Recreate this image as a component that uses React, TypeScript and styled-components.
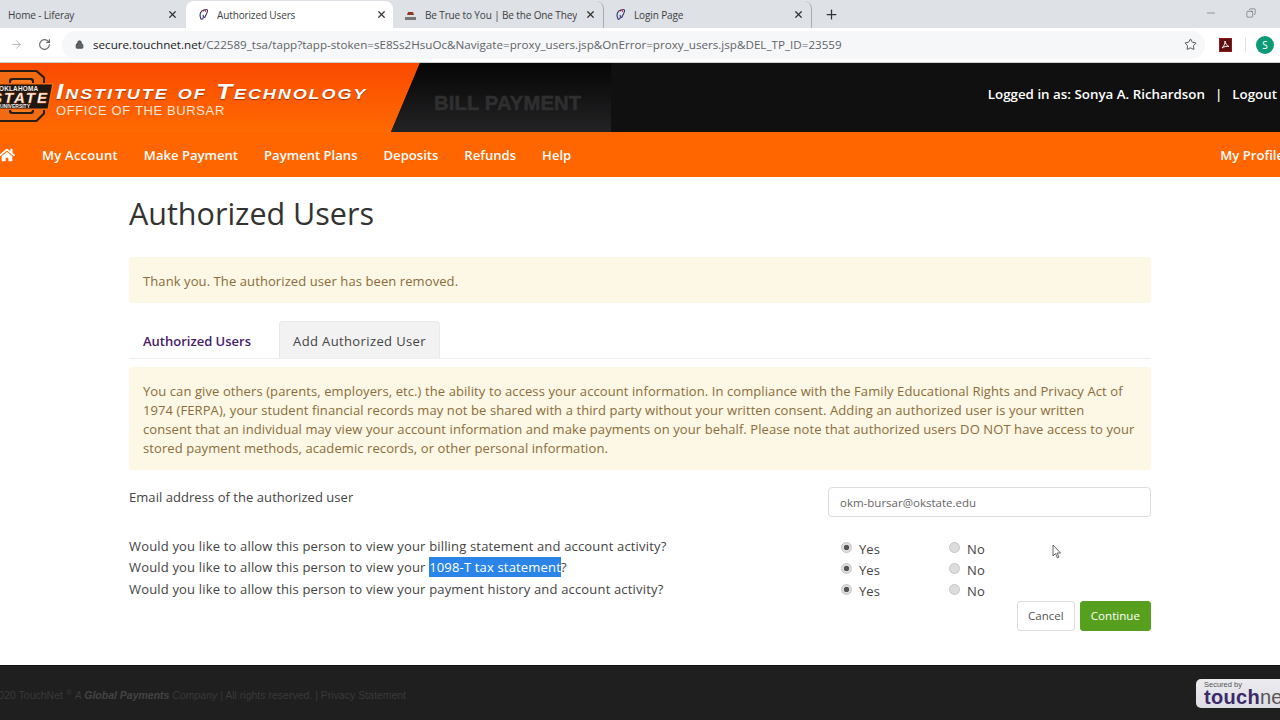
import React from "react";
import styled, { createGlobalStyle } from "styled-components";
import { FaHome } from "react-icons/fa";
import { X, Plus, Minus, ArrowRight, RotateCw, Lock, Star, Copy } from "lucide-react";

const Global = createGlobalStyle`
  html, body { margin: 0; padding: 0; width: 1280px; height: 720px; overflow: hidden; background: #fff; }
  body { font-family: "Open Sans", "Noto Sans", sans-serif; }
  * { box-sizing: border-box; }
`;
const Page = styled.div`
  width: 1280px; height: 720px; display: flex; flex-direction: column; overflow: hidden; position: relative;
`;
const TabBar = styled.div`
  height: 28px; background: #dee1e6; display: flex; align-items: stretch; flex: none; color: #3c4043;
`;
const Tab = styled.div<{ $w: number; $active?: boolean; $sep?: boolean; $pl: number; $pr: number }>`
  width: ${(p) => p.$w}px; flex: none; display: flex; align-items: center; padding: 0 ${(p) => p.$pr}px 0 ${(p) => p.$pl}px;
  background: ${(p) => (p.$active ? "#fff" : "transparent")}; border-radius: 8px 8px 0 0; gap: 8px;
  font-size: 10px; letter-spacing: -.13px; margin-top: 1px;
  border-right: ${(p) => (p.$sep ? "1px solid #a9acb1" : "0")};
  background-clip: padding-box;
`;
const TabLabel = styled.span`
  flex: 1; white-space: nowrap; overflow: hidden;
`;
const NewTab = styled.div`
  margin-left: 12px; display: flex; align-items: center; color: #333;
`;
const WinButtons = styled.div`
  margin-left: auto; display: flex; align-items: center; gap: 29px; padding-right: 24px; color: #444; padding-bottom: 3px;
`;
const ToolBar = styled.div`
  height: 34px; flex: none; background: #fff; display: flex; align-items: center; color: #5f6368; padding: 0 0 1px 10px;
`;
const Address = styled.div`
  margin-left: 11px; width: 1143px; height: 28px; border-radius: 14px; background: #f6f7f8; display: flex; align-items: center; padding-left: 13px; gap: 9px;
  font-size: 11.65px; color: #3c4043; white-space: nowrap;
`;
const Url = styled.span`
  color: #5f6368; b { font-weight: 400; color: #202124; }
`;
const StarSlot = styled.span`
  margin-left: auto; margin-right: 8px; display: flex; color: #333;
`;
const Pdf = styled.div`
  margin-left: 14px; width: 13px; height: 14px; background: #5e0f10; border: 1px solid #8f1a1a; flex: none; display: flex; align-items: center; justify-content: center;
`;
const ToolDivider = styled.div`
  margin-left: 13px; width: 1px; height: 15px; background: #e3e3e3; flex: none;
`;
const Avatar = styled.div`
  margin-left: 10px; width: 18px; height: 18px; border-radius: 50%; background: #0d9a76; color: #fff; font-size: 10px; display: flex; align-items: center; justify-content: center; flex: none;
`;
const Header = styled.header`
  height: 70px; flex: none; display: flex; border-top: 1px solid #cfcfcf;
  background: linear-gradient(180deg, #fb4a00 0%, #ff6a00 100%);
`;
const Brand = styled.div`
  width: 391px; flex: none; display: flex; align-items: center; position: relative;
`;
const BrandText = styled.div`
  margin-left: 2px; color: #fff; display: flex; flex-direction: column; margin-top: 4px; gap: 3px;
`;
const BrandTitle = styled.div`
  font: italic 700 22px "Liberation Sans", sans-serif; font-variant: small-caps; letter-spacing: 1.6px; line-height: 19px; white-space: nowrap;
  transform: scaleX(1.2); transform-origin: left center; text-shadow: 0 1px 1px rgba(90,30,0,.6);
`;
const BrandSub = styled.div`
  font: 400 13px "Liberation Sans", sans-serif; letter-spacing: .62px; line-height: 14px; color: #fbe5d6; white-space: nowrap;
`;
const Dark = styled.div`
  flex: 1; display: flex; align-items: stretch; background: #101010;
  clip-path: polygon(29px 0, 100% 0, 100% 100%, 0 100%);
`;
const Banner = styled.div`
  width: 220px; flex: none; background: linear-gradient(180deg, #050505, #232325); display: flex; align-items: center; padding: 11px 0 0 43px;
  font: 700 20.2px "Liberation Sans", sans-serif; color: #2f2f30; letter-spacing: .15px; white-space: nowrap; -webkit-text-stroke: .5px #2f2f30;
`;
const Logged = styled.div`
  margin-left: auto; display: flex; align-items: center; gap: 10px; padding: 0 3px 8px 0; color: #fff; font-size: 13.35px; font-weight: 600; white-space: nowrap;
`;
const Nav = styled.nav`
  height: 46px; flex: none; background: #ff6600; display: flex; align-items: center; gap: 26px; color: #fff; font-size: 13.08px; font-weight: 600; white-space: nowrap; overflow: hidden;
  border-bottom: 1px solid #fff;
`;
const HomeLink = styled.span`
  display: flex; margin-right: 1px; margin-left: -1px;
`;
const NavAccount = styled.span`
  letter-spacing: .2px;
`;
const Profile = styled.span`
  margin-left: auto; margin-right: -4px;
`;
const Main = styled.main`
  flex: 1; padding: 0 129px; display: flex; flex-direction: column; color: #444;
`;
const Title = styled.h1`
  margin: 16px 0 0; font-size: 30.5px; line-height: 39px; font-weight: 500; color: #333;
`;
const Alert = styled.div<{ $mt: number }>`
  margin-top: ${(p) => p.$mt}px; padding: 15px 15px 12px 14px; background: #fdf7e5; color: #8a6d3b; font-size: 13px; line-height: 19px; border-radius: 3px; letter-spacing: .09px;
`;
const TabRow = styled.div`
  margin-top: 18px; height: 38px; display: flex; border-bottom: 1px solid #eee; font-size: 13px;
`;
const PageTab = styled.div<{ $active?: boolean }>`
  padding: 1px 13px 0; display: flex; align-items: center; height: 37px; font-weight: ${(p) => (p.$active ? 500 : 600)};
  color: ${(p) => (p.$active ? "#444" : "#46206b")}; background: ${(p) => (p.$active ? "#f2f2f2" : "transparent")};
  border: 1px solid ${(p) => (p.$active ? "#e9e9e9" : "transparent")}; border-bottom: 0; border-radius: 4px 4px 0 0;
  margin-right: ${(p) => (p.$active ? 0 : 14)}px; letter-spacing: ${(p) => (p.$active ? 0.38 : 0)}px;
`;
const Form = styled.div`
  margin-top: 17px; display: grid; grid-template-columns: 699px 1fr; font-size: 13px; color: #444; letter-spacing: .17px;
`;
const EmailLabel = styled.div`
  line-height: 19px; padding-top: 1px; letter-spacing: .05px;
`;
const EmailInput = styled.div`
  height: 30px; border: 1px solid #ddd; border-radius: 4px; display: flex; align-items: center; padding-left: 11px; font-size: 11.5px; color: #666; background: #fff; letter-spacing: 0;
`;
const Questions = styled.div`
  margin-top: 19px; line-height: 21.3px;
`;
const Hl = styled.span`
  background: #2b85e8; color: #fff; padding: 1px 0;
`;
const RadioGrid = styled.div`
  margin-top: 21px; padding-left: 13px; display: grid; grid-template-columns: 108px 100px; grid-auto-rows: 21.3px; justify-content: start; letter-spacing: .1px;
`;
const RadioCell = styled.label`
  display: flex; align-items: center; gap: 7px;
`;
const Radio = styled.input`
  appearance: none; width: 11px; height: 11px; margin: 0 0 3px; border-radius: 50%; flex: none;
  background: #dcdcdc; border: 1px solid #c6c6c6;
  &:checked { background: radial-gradient(circle, #555 0 2.4px, #dcdcdc 3px); }
`;
const Actions = styled.div`
  grid-column: 2; margin-top: -1px; display: flex; justify-content: flex-end; gap: 5px; font-size: 11.6px; letter-spacing: 0;
`;
const Btn = styled.div<{ $primary?: boolean }>`
  height: 30px; padding: 0 10px; display: flex; align-items: center; border-radius: 3px;
  border: 1px solid ${(p) => (p.$primary ? "#57a01e" : "#ddd")}; background: ${(p) => (p.$primary ? "#57a01e" : "#fff")}; color: ${(p) => (p.$primary ? "#fff" : "#555")};
`;
const Footer = styled.footer`
  margin-top: auto; height: 55px; flex: none; background: #1f1f1f; border-top: 1px solid #111; display: flex; align-items: center; overflow: hidden;
`;
const Legal = styled.div`
  width: 406px; flex: none; display: flex; justify-content: flex-end; white-space: nowrap; font: 10.5px "Liberation Sans", sans-serif; color: #3a3a3a; padding-top: 3px;
  i { white-space: pre; } b { color: #444; } sup { font-size: 8px; line-height: 0; }
`;
const Badge = styled.div`
  margin-left: auto; margin-right: -38px; width: 122px; height: 29px; flex: none; background: linear-gradient(180deg, #ececf0, #dcdce4); border-radius: 5px; padding: 2px 0 0 8px; color: #3a2a68;
  display: flex; flex-direction: column;
`;
const Secured = styled.span`
  font: 7.5px/8px "Liberation Sans", sans-serif; color: #555;
`;
const TouchName = styled.span`
  font: 700 20px/16px "Liberation Sans", sans-serif; white-space: nowrap; letter-spacing: .3px;
  em { font-style: normal; font-weight: 400; color: #555; }
`;
const Pointer = styled.svg`
  position: absolute; left: 1052px; top: 544px;
`;

const LoopIcon = () => (
  <svg width="11" height="13" viewBox="0 0 11 13" fill="none" stroke="#2b2a6b" strokeWidth="1.1" style={{ flex: "none" }}>
    <path d="M6 2 C2 3 1 7 3 11 C5 12 6 9 5 7" />
    <path d="M5 3 C7 1 10 1 9.5 3 C9 6 7 8 6.5 10" />
    <path d="M7 1 L7.5 4" stroke="#d33" />
  </svg>
);
const CloseBtn = () => <X size={11} strokeWidth={2.6} color="#333" style={{ flex: "none" }} />;

const OsuLogo = () => (
  <svg width="54" height="56" viewBox="0 0 54 56" style={{ flex: "none", marginBottom: 3 }}>
    <polygon points="-10,2 37,2 45,9 45,46 37,54 -10,54" fill="#2a1d14" />
    <polygon points="-10,4 36,4 43,10 43,45 36,52 -10,52" fill="#f26a12" />
    <rect x="9" y="10" width="25" height="36" rx="3" fill="#2a1d14" />
    <rect x="11" y="12" width="21" height="32" rx="2" fill="#ff7a1c" />
    <polygon points="-8,15 54,15 49,42 -8,42" fill="#f26a12" />
    <polygon points="-8,16.5 52,16.5 47.5,40.5 -8,40.5" fill="#1f1712" />
    <text x="-1" y="22.5" fontSize="6.4" fontWeight="700" fill="#f5f0ea" fontFamily="Liberation Sans" letterSpacing=".2">OKLAHOMA</text>
    <text x="-8" y="35" fontSize="15" fontWeight="700" fontStyle="italic" fill="#fff" stroke="#f26a12" strokeWidth=".35" fontFamily="Liberation Sans" letterSpacing="2">STATE</text>
    <text x="0" y="40" fontSize="5" fontWeight="700" fill="#f5f0ea" fontFamily="Liberation Sans">UNIVERSITY</text>
  </svg>
);

export default function App() {
  return (
    <Page>
      <Global />
      <TabBar>
        <Tab $w={186} $pl={8} $pr={8}><TabLabel>Home - Liferay</TabLabel><CloseBtn /></Tab>
        <Tab $w={207} $active $pl={12} $pr={6}><LoopIcon /><TabLabel>Authorized Users</TabLabel><CloseBtn /></Tab>
        <Tab $w={211} $sep $pl={11} $pr={7}>
          <svg width="13" height="12" viewBox="0 0 13 12" style={{ flex: "none" }}><path d="M4 3 h5 l1 3 h-7z" fill="#8a3a22" /><path d="M1 8 h11 v3 h-11z" fill="#777" /></svg>
          <TabLabel>Be True to You | Be the One They</TabLabel><CloseBtn />
        </Tab>
        <Tab $w={208} $sep $pl={11} $pr={7}><LoopIcon /><TabLabel>Login Page</TabLabel><CloseBtn /></Tab>
        <NewTab><Plus size={15} strokeWidth={2} /></NewTab>
        <WinButtons><Minus size={12} strokeWidth={1} /><Copy size={10} strokeWidth={1.2} style={{ transform: "scaleX(-1)" }} /></WinButtons>
      </TabBar>
      <ToolBar>
        <ArrowRight size={13} color="#b3b5b8" strokeWidth={1.8} />
        <RotateCw size={13} strokeWidth={2} style={{ marginLeft: 15 }} />
        <Address>
          <Lock size={9} fill="#5f6368" strokeWidth={2} style={{ flex: "none" }} />
          <Url><b>secure.touchnet.net</b>/C22589_tsa/tapp?tapp-stoken=sE8Ss2HsuOc&amp;Navigate=proxy_users.jsp&amp;OnError=proxy_users.jsp&amp;DEL_TP_ID=23559</Url>
          <StarSlot><Star size={13} strokeWidth={1.5} /></StarSlot>
        </Address>
        <Pdf>
          <svg width="9" height="9" viewBox="0 0 9 9" fill="none" stroke="#fff" strokeWidth="1"><path d="M1 8 C3 6 4.5 3 4 1 C4 3 6 6 8 6.5 C6 6 3 6.5 1 8Z" /></svg>
        </Pdf>
        <ToolDivider />
        <Avatar>S</Avatar>
      </ToolBar>
      <Header>
        <Brand>
          <OsuLogo />
          <BrandText>
            <BrandTitle>Institute of Technology</BrandTitle>
            <BrandSub>OFFICE OF THE BURSAR</BrandSub>
          </BrandText>
        </Brand>
        <Dark>
          <Banner>BILL PAYMENT</Banner>
          <Logged><span>Logged in as: Sonya A. Richardson</span><span>|</span><span>Logout</span></Logged>
        </Dark>
      </Header>
      <Nav>
        <HomeLink><FaHome size={16} /></HomeLink>
        <NavAccount>My Account</NavAccount><span>Make Payment</span><span>Payment Plans</span><span>Deposits</span><span>Refunds</span><span>Help</span>
        <Profile>My Profile</Profile>
      </Nav>
      <Main>
        <Title>Authorized Users</Title>
        <Alert $mt={24}>Thank you. The authorized user has been removed.</Alert>
        <TabRow>
          <PageTab>Authorized Users</PageTab>
          <PageTab $active>Add Authorized User</PageTab>
        </TabRow>
        <Alert $mt={8}>
          You can give others (parents, employers, etc.) the ability to access your account information. In compliance with the Family Educational Rights and Privacy Act of 1974 (FERPA), your student financial records may not be shared with a third party without your written consent. Adding an authorized user is your written consent that an individual may view your account information and make payments on your behalf. Please note that authorized users DO NOT have access to your stored payment methods, academic records, or other personal information.
        </Alert>
        <Form>
          <EmailLabel>Email address of the authorized user</EmailLabel>
          <EmailInput>okm-bursar@okstate.edu</EmailInput>
          <Questions>
            <div>Would you like to allow this person to view your billing statement and account activity?</div>
            <div>Would you like to allow this person to view your <Hl>1098-T tax statement</Hl>?</div>
            <div>Would you like to allow this person to view your payment history and account activity?</div>
          </Questions>
          <RadioGrid>
            {[0, 1, 2].map((i) => (
              <React.Fragment key={i}>
                <RadioCell><Radio type="radio" name={`q${i}`} defaultChecked />Yes</RadioCell>
                <RadioCell><Radio type="radio" name={`q${i}`} />No</RadioCell>
              </React.Fragment>
            ))}
          </RadioGrid>
          <Actions>
            <Btn>Cancel</Btn>
            <Btn $primary>Continue</Btn>
          </Actions>
        </Form>
      </Main>
      <Footer>
        <Legal><span>© 2020 TouchNet <sup>®</sup> <i>A <b>Global Payments</b> Company</i> | All rights reserved. | Privacy Statement</span></Legal>
        <Badge>
          <Secured>Secured by</Secured>
          <TouchName>touch<em>net</em></TouchName>
        </Badge>
      </Footer>
      <Pointer width="10" height="15" viewBox="0 0 10 15"><path d="M1 1 V12 L3.5 9.5 L5.5 14 L7 13 L5 9 H8.5 Z" fill="#fff" stroke="#555" strokeWidth=".9" /></Pointer>
    </Page>
  );
}
